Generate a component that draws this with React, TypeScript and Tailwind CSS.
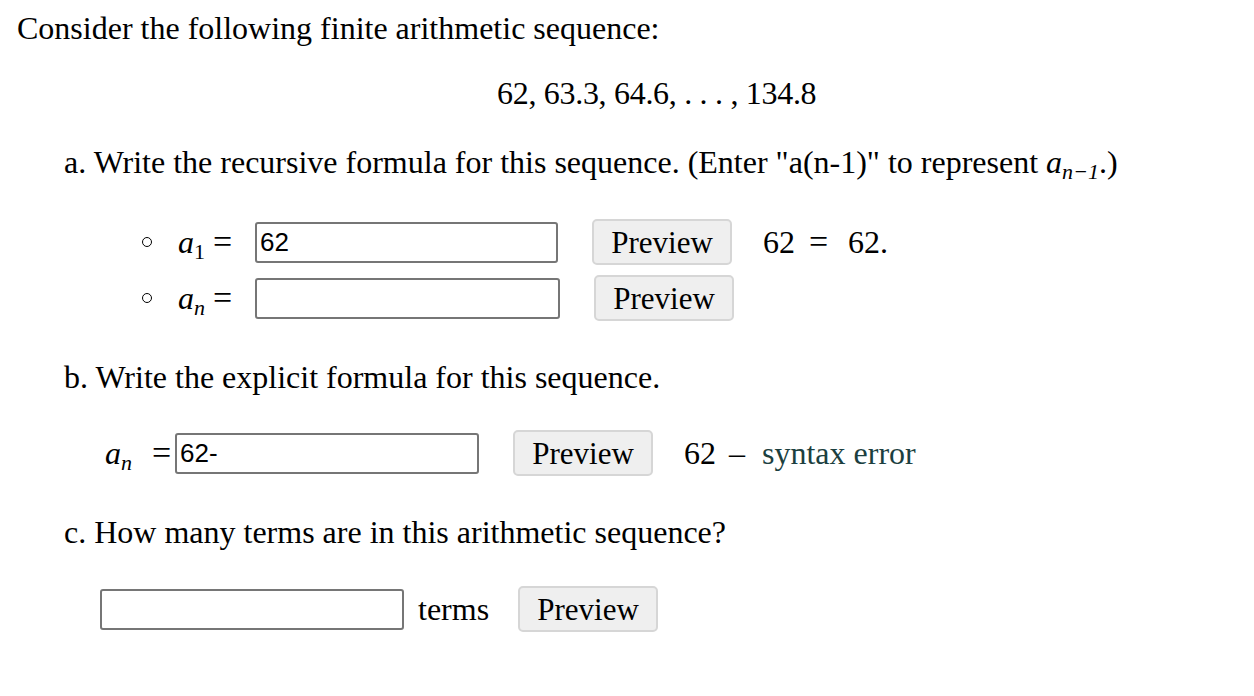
import React from "react";

const serif = "font-['Liberation_Serif','Times_New_Roman',serif]";

const Preview = ({ className = "" }: { className?: string }) => (
  <button
    className={`h-[46px] w-[140px] shrink-0 rounded-[5px] border-2 border-[#d6d6d6] bg-[#efefef] text-[31px] leading-none text-black ${serif} ${className}`}
  >
    Preview
  </button>
);

const Field = ({ value = "", className = "" }: { value?: string; className?: string }) => (
  <input
    readOnly
    value={value}
    className={`h-[41px] shrink-0 rounded-[3px] border-2 border-[#767676] bg-white px-[3px] font-['Liberation_Sans',Arial,sans-serif] text-[26px] text-black outline-none ${className}`}
  />
);

const Sub = ({ base, sub, italicSub = false }: { base: string; sub: string; italicSub?: boolean }) => (
  <span className="italic">
    {base}
    <sub className={`text-[22px] ${italicSub ? "italic" : "not-italic"}`}>{sub}</sub>
  </span>
);

const Eq = ({ className = "" }: { className?: string }) => (
  <span className={`inline-block w-[23px] text-center text-[34px] leading-none ${className}`}>=</span>
);

const App = () => {
  return (
    <div className={`h-[696px] w-[1254px] overflow-hidden bg-white text-[32px] text-black ${serif}`}>
      <p className="pl-[17px] pt-[10px] leading-[36px]">Consider the following finite arithmetic sequence:</p>
      <p className="mt-[29px] pl-[497px] leading-[36px] tracking-[-0.3px]">62, 63.3, 64.6, . . . , 134.8</p>

      <p className="mt-[33px] pl-[64px] leading-[36px]">
        a. Write the recursive formula for this sequence. (Enter "a(n-1)" to represent{" "}
        <span className="italic">a</span>
        <sub className="text-[22px] italic">n−1</sub>.)
      </p>

      <ul className="mt-[39px] flex flex-col gap-[10px]">
        <li className="flex h-[46px] items-center">
          <span className="ml-[142px] h-[10px] w-[10px] rounded-full border-[1.5px] border-black" />
          <span className="ml-[26px] w-[33px] leading-none">
            <Sub base="a" sub="1" />
          </span>
          <Eq />
          <Field value="62" className="ml-[21px] w-[303px]" />
          <Preview className="ml-[34px]" />
          <span className="ml-[31px]">62</span>
          <Eq className="ml-[12px]" />
          <span className="ml-[18px]">62.</span>
        </li>
        <li className="flex h-[46px] items-center">
          <span className="ml-[142px] h-[10px] w-[10px] rounded-full border-[1.5px] border-black" />
          <span className="ml-[26px] w-[33px] leading-none">
            <Sub base="a" sub="n" italicSub />
          </span>
          <Eq />
          <Field className="ml-[21px] w-[305px]" />
          <Preview className="ml-[34px]" />
        </li>
      </ul>

      <p className="mt-[38px] pl-[64px] leading-[36px]">b. Write the explicit formula for this sequence.</p>

      <div className="mt-[35px] flex h-[46px] items-center">
        <span className="ml-[105px] w-[45px] leading-none">
          <Sub base="a" sub="n" italicSub />
        </span>
        <Eq />
        <Field value="62-" className="ml-[2px] w-[304px]" />
        <Preview className="ml-[34px]" />
        <span className="ml-[31px]">62</span>
        <span className="ml-[13px]">–</span>
        <span className="ml-[17px] text-[#1c3f3f]">syntax error</span>
      </div>

      <p className="mt-[38px] pl-[64px] leading-[36px]">c. How many terms are in this arithmetic sequence?</p>

      <div className="mt-[36px] flex h-[46px] items-center">
        <Field className="ml-[100px] w-[304px]" />
        <span className="ml-[14px]">terms</span>
        <Preview className="ml-[29px]" />
      </div>
    </div>
  );
};

export default App;
